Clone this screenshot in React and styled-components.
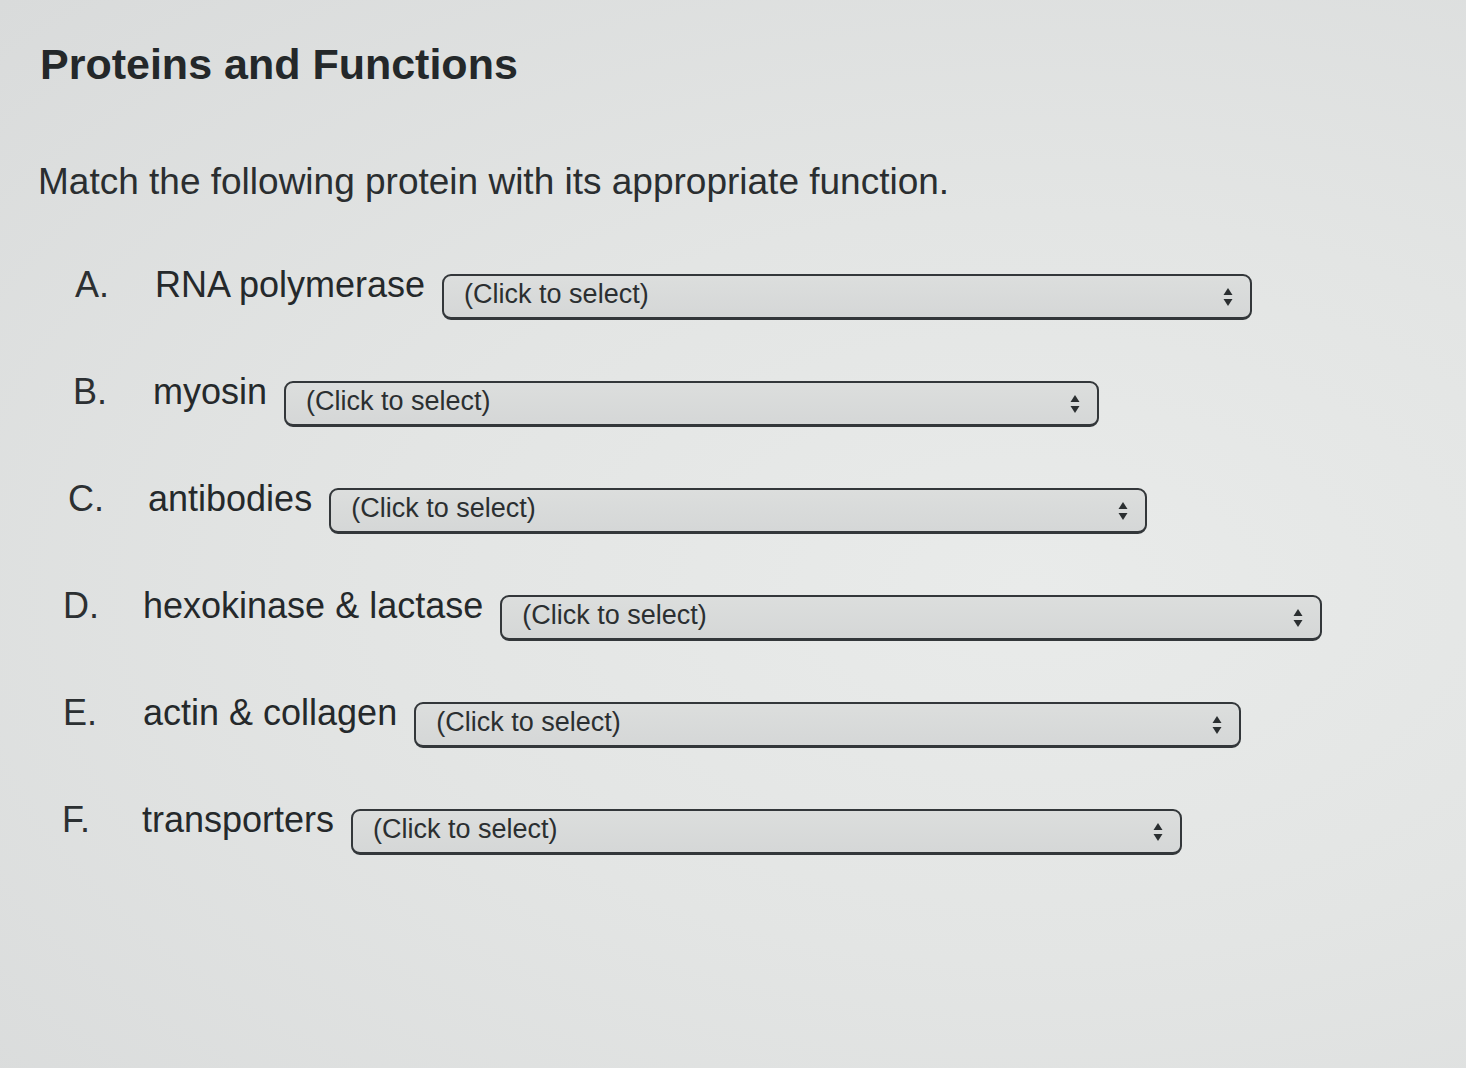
import React from "react";
import styled, { createGlobalStyle } from "styled-components";

const Global = createGlobalStyle`
  html, body { margin: 0; padding: 0; }
  body {
    width: 1466px;
    height: 1068px;
    overflow: hidden;
    background: radial-gradient(ellipse at 70% 55%, #e9ebea 0%, #e3e5e4 45%, #d9dbdb 100%);
    font-family: "Liberation Sans", Arial, sans-serif;
    color: #262a2c;
  }
`;

const Page = styled.main`
  padding: 36px 0 0 40px;
`;

const Title = styled.h1`
  margin: 0;
  font-size: 43px;
  font-weight: 700;
  line-height: 56px;
  color: #24282a;
`;

const Prompt = styled.p`
  margin: 68px 0 0 -2px;
  font-size: 37px;
  line-height: 44px;
  color: #2a2e30;
`;

const List = styled.div`
  display: flex;
  flex-direction: column;
  gap: 61px;
  margin-top: 70px;
  padding-left: 28px;
`;

const Row = styled.div`
  display: flex;
  align-items: center;
  height: 46px;
  margin-left: ${(p) => p.$shift}px;
`;

const Letter = styled.span`
  width: 80px;
  font-size: 36px;
  color: #2c3032;
  margin-bottom: 24px;
`;

const Name = styled.span`
  font-size: 36px;
  color: #25292b;
  margin-right: 17px;
  margin-bottom: 24px;
  white-space: nowrap;
`;

const Select = styled.div`
  box-sizing: border-box;
  width: ${(p) => p.$w}px;
  height: 46px;
  border: 2px solid #33373a;
  border-bottom-width: 3px;
  border-radius: 9px;
  background: linear-gradient(180deg, #dcdedd 0%, #d5d7d7 100%);
  display: flex;
  align-items: center;
  justify-content: space-between;
  padding: 0 16px 0 20px;
  font-size: 27px;
  color: #2b2f31;
`;

const Label = styled.span`
  margin-bottom: 4px;
`;

const Arrows = styled.svg`
  width: 12px;
  height: 26px;
  flex: none;
`;

const rows = [
  ["A.", "RNA polymerase", 810, 7],
  ["B.", "myosin", 815, 5],
  ["C.", "antibodies", 818, 0],
  ["D.", "hexokinase & lactase", 822, -5],
  ["E.", "actin & collagen", 827, -5],
  ["F.", "transporters", 831, -6],
];

export default function App() {
  return (
    <>
      <Global />
      <Page>
        <Title>Proteins and Functions</Title>
        <Prompt>Match the following protein with its appropriate function.</Prompt>
        <List>
          {rows.map(([l, n, w, s]) => (
            <Row key={l} $shift={s}>
              <Letter>{l}</Letter>
              <Name>{n}</Name>
              <Select $w={w}>
                <Label>(Click to select)</Label>
                <Arrows viewBox="0 0 12 26">
                  <path d="M6 4 L10.5 11 L1.5 11 Z" fill="#2b2f31" />
                  <path d="M6 22 L10.5 15 L1.5 15 Z" fill="#2b2f31" />
                </Arrows>
              </Select>
            </Row>
          ))}
        </List>
      </Page>
    </>
  );
}
